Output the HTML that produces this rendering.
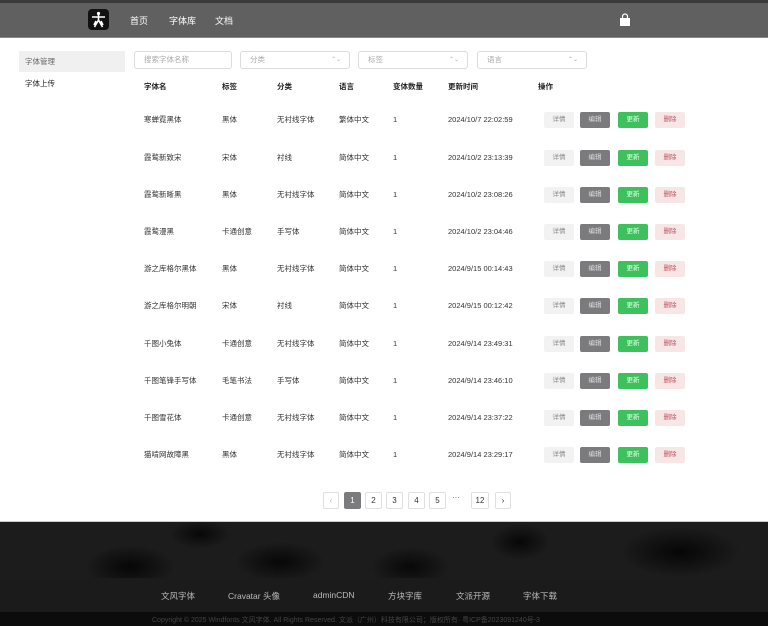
<!DOCTYPE html>
<html><head><meta charset="utf-8"><style>
*{margin:0;padding:0;box-sizing:border-box}
body{width:768px;height:626px;overflow:hidden;background:#fff;font-family:"Liberation Sans","Noto Sans CJK SC",sans-serif;position:relative;color:#333}
.a{position:absolute}
.hdr{left:0;top:0;width:768px;height:38px;background:#606060;border-top:3px solid #3a3a3a;border-bottom:1px solid #888}
.nav{color:#fff;font-size:9px;top:14px}
.side{left:19px;width:106px;height:21px;font-size:7.5px;line-height:21px;padding-left:6px}
.inp{top:51px;height:18px;border:1px solid #dcdcdc;border-radius:3px;font-size:7.5px;color:#aaa;line-height:16px;padding-left:9px}
.inp i{position:absolute;right:8px;top:0;font-style:normal;font-size:6px;color:#aaa}
.th{top:81px;font-size:7.5px;font-weight:bold;color:#222}
.r{position:absolute;left:0;width:768px;height:16px;font-size:7.5px;line-height:16px;color:#333}
.r span{position:absolute;top:0}
.b{position:absolute;top:0;height:16px;width:30px;border-radius:2px;font-size:6.5px;text-align:center;line-height:16px}
.b1{left:544px;background:#f2f2f2;color:#888}
.b2{left:580px;background:#7b7b7e;color:#ddd}
.b3{left:618px;background:#3cc15c;color:#eaffea}
.b4{left:655px;background:#f6e6e6;color:#c05060}
.pg{top:492px;height:17px;border:1px solid #e0e0e0;border-radius:2px;font-size:8px;text-align:center;line-height:15px;color:#333}
.ft{left:0;top:521px;width:768px;height:57px;border-top:1px solid #ccc;background:radial-gradient(ellipse 45px 22px at 130px 45px,#060606,transparent),radial-gradient(ellipse 45px 20px at 280px 40px,#070707,transparent),radial-gradient(ellipse 30px 15px at 200px 12px,#080808,transparent),radial-gradient(ellipse 40px 20px at 410px 45px,#080808,transparent),radial-gradient(ellipse 30px 18px at 520px 20px,#070707,transparent),radial-gradient(ellipse 60px 25px at 680px 30px,#060606,transparent),#1c1c1c}
.fl{top:590px;font-size:8.5px;color:#bbb}
</style></head><body>
<div class="a hdr"></div>
<div class="a" style="left:88px;top:9px;width:21px;height:21px;background:#111;border-radius:4px">
<svg width="21" height="21" viewBox="0 0 21 21"><circle cx="10.5" cy="4.5" r="1.6" fill="#fff"/><path d="M4 8 L17 8 M10.5 6 L10.5 11 M10.5 11 L6.5 18 M10.5 11 L14.5 18 M8 12 L6 16 M13 12 L15 16" stroke="#fff" stroke-width="1.6" fill="none"/></svg></div>
<div class="a nav" style="left:130px">首页</div>
<div class="a nav" style="left:169px">字体库</div>
<div class="a nav" style="left:215px">文档</div>
<svg class="a" style="left:619px;top:13px" width="12" height="13" viewBox="0 0 12 13"><path d="M3.5 5 V3.5 a2.5 2.5 0 0 1 5 0 V5" stroke="#fff" stroke-width="1.2" fill="none"/><rect x="1" y="5" width="10" height="8" fill="#fff"/></svg>

<div class="a side" style="top:51px;background:#f0f0f0;color:#666">字体管理</div>
<div class="a side" style="top:73px;color:#222">字体上传</div>

<div class="a inp" style="left:134px;width:98px">搜索字体名称</div>
<div class="a inp" style="left:240px;width:110px">分类<i>⌃⌄</i></div>
<div class="a inp" style="left:358px;width:110px">标签<i>⌃⌄</i></div>
<div class="a inp" style="left:477px;width:110px">语言<i>⌃⌄</i></div>

<div class="a th" style="left:144px">字体名</div>
<div class="a th" style="left:222px">标签</div>
<div class="a th" style="left:277px">分类</div>
<div class="a th" style="left:339px">语言</div>
<div class="a th" style="left:393px">变体数量</div>
<div class="a th" style="left:448px">更新时间</div>
<div class="a th" style="left:538px">操作</div>

<div class="r" style="top:112px"><span style="left:144px">寒蝉霓黑体</span><span style="left:222px">黑体</span><span style="left:277px">无衬线字体</span><span style="left:339px">繁体中文</span><span style="left:393px">1</span><span style="left:448px">2024/10/7 22:02:59</span><div class="b b1">详情</div><div class="b b2">编辑</div><div class="b b3">更新</div><div class="b b4">删除</div></div>
<div class="r" style="top:150px"><span style="left:144px">霞鹜新致宋</span><span style="left:222px">宋体</span><span style="left:277px">衬线</span><span style="left:339px">简体中文</span><span style="left:393px">1</span><span style="left:448px">2024/10/2 23:13:39</span><div class="b b1">详情</div><div class="b b2">编辑</div><div class="b b3">更新</div><div class="b b4">删除</div></div>
<div class="r" style="top:187px"><span style="left:144px">霞鹜新晰黑</span><span style="left:222px">黑体</span><span style="left:277px">无衬线字体</span><span style="left:339px">简体中文</span><span style="left:393px">1</span><span style="left:448px">2024/10/2 23:08:26</span><div class="b b1">详情</div><div class="b b2">编辑</div><div class="b b3">更新</div><div class="b b4">删除</div></div>
<div class="r" style="top:224px"><span style="left:144px">霞鹜漫黑</span><span style="left:222px">卡通创意</span><span style="left:277px">手写体</span><span style="left:339px">简体中文</span><span style="left:393px">1</span><span style="left:448px">2024/10/2 23:04:46</span><div class="b b1">详情</div><div class="b b2">编辑</div><div class="b b3">更新</div><div class="b b4">删除</div></div>
<div class="r" style="top:261px"><span style="left:144px">游之库格尔黑体</span><span style="left:222px">黑体</span><span style="left:277px">无衬线字体</span><span style="left:339px">简体中文</span><span style="left:393px">1</span><span style="left:448px">2024/9/15 00:14:43</span><div class="b b1">详情</div><div class="b b2">编辑</div><div class="b b3">更新</div><div class="b b4">删除</div></div>
<div class="r" style="top:298px"><span style="left:144px">游之库格尔明朝</span><span style="left:222px">宋体</span><span style="left:277px">衬线</span><span style="left:339px">简体中文</span><span style="left:393px">1</span><span style="left:448px">2024/9/15 00:12:42</span><div class="b b1">详情</div><div class="b b2">编辑</div><div class="b b3">更新</div><div class="b b4">删除</div></div>
<div class="r" style="top:336px"><span style="left:144px">千图小兔体</span><span style="left:222px">卡通创意</span><span style="left:277px">无衬线字体</span><span style="left:339px">简体中文</span><span style="left:393px">1</span><span style="left:448px">2024/9/14 23:49:31</span><div class="b b1">详情</div><div class="b b2">编辑</div><div class="b b3">更新</div><div class="b b4">删除</div></div>
<div class="r" style="top:373px"><span style="left:144px">千图笔锋手写体</span><span style="left:222px">毛笔书法</span><span style="left:277px">手写体</span><span style="left:339px">简体中文</span><span style="left:393px">1</span><span style="left:448px">2024/9/14 23:46:10</span><div class="b b1">详情</div><div class="b b2">编辑</div><div class="b b3">更新</div><div class="b b4">删除</div></div>
<div class="r" style="top:410px"><span style="left:144px">千图雪花体</span><span style="left:222px">卡通创意</span><span style="left:277px">无衬线字体</span><span style="left:339px">简体中文</span><span style="left:393px">1</span><span style="left:448px">2024/9/14 23:37:22</span><div class="b b1">详情</div><div class="b b2">编辑</div><div class="b b3">更新</div><div class="b b4">删除</div></div>
<div class="r" style="top:447px"><span style="left:144px">猫啃网故障黑</span><span style="left:222px">黑体</span><span style="left:277px">无衬线字体</span><span style="left:339px">简体中文</span><span style="left:393px">1</span><span style="left:448px">2024/9/14 23:29:17</span><div class="b b1">详情</div><div class="b b2">编辑</div><div class="b b3">更新</div><div class="b b4">删除</div></div>

<div class="a pg" style="left:323px;width:16px;color:#bbb">‹</div>
<div class="a pg" style="left:344px;width:17px;background:#7b7b7e;border-color:#7b7b7e;color:#fff">1</div>
<div class="a pg" style="left:365px;width:17px">2</div>
<div class="a pg" style="left:386px;width:17px">3</div>
<div class="a pg" style="left:408px;width:17px">4</div>
<div class="a pg" style="left:429px;width:17px">5</div>
<div class="a" style="left:452px;top:493px;font-size:8px;color:#555">···</div>
<div class="a pg" style="left:471px;width:18px">12</div>
<div class="a pg" style="left:495px;width:16px">›</div>

<div class="a ft"></div>
<div class="a" style="left:0;top:578px;width:768px;height:34px;background:#1b1b1b"></div>
<div class="a" style="left:0;top:612px;width:768px;height:14px;background:#0c0c0c"></div>
<div class="a fl" style="left:161px">文风字体</div>
<div class="a fl" style="left:228px">Cravatar 头像</div>
<div class="a fl" style="left:313px">adminCDN</div>
<div class="a fl" style="left:388px">方块字库</div>
<div class="a fl" style="left:456px">文派开源</div>
<div class="a fl" style="left:523px">字体下载</div>
<div class="a" style="left:152px;top:615px;font-size:7px;color:#444;white-space:nowrap">Copyright © 2025 Windfonts 文风字体. All Rights Reserved. 文派（广州）科技有限公司；版权所有· 粤ICP备2023091240号-3</div>
</body></html>
